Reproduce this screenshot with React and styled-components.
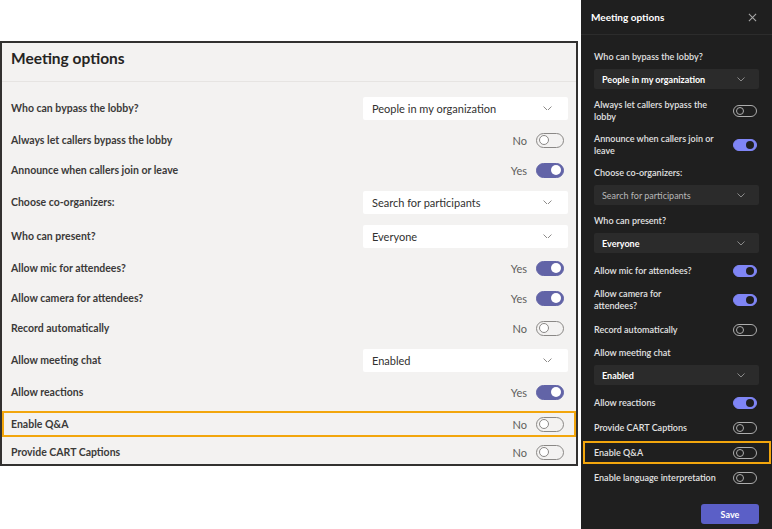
import styled, { createGlobalStyle } from 'styled-components'

const GlobalStyle = createGlobalStyle`
    body {
        margin: 0;
        background: #ffffff;
        font-family: Lato, "Liberation Sans", sans-serif;
    }
`

// data
const lightRows = [
    { label: 'Who can bypass the lobby?', value: 'People in my organization' },
    { label: 'Always let callers bypass the lobby', on: false },
    { label: 'Announce when callers join or leave', on: true },
    { label: 'Choose co-organizers:', value: 'Search for participants' },
    { label: 'Who can present?', value: 'Everyone' },
    { label: 'Allow mic for attendees?', on: true },
    { label: 'Allow camera for attendees?', on: true },
    { label: 'Record automatically', on: false },
    { label: 'Allow meeting chat', value: 'Enabled' },
    { label: 'Allow reactions', on: true },
    { label: 'Enable Q&A', on: false, highlight: true },
    { label: 'Provide CART Captions', on: false },
]

const darkRows = [
    { lines: ['Who can bypass the lobby?'], value: 'People in my organization', strong: true },
    { lines: ['Always let callers bypass the', 'lobby'], on: false },
    { lines: ['Announce when callers join or', 'leave'], on: true },
    { lines: ['Choose co-organizers:'], value: 'Search for participants' },
    { lines: ['Who can present?'], value: 'Everyone', strong: true },
    { lines: ['Allow mic for attendees?'], on: true },
    { lines: ['Allow camera for', 'attendees?'], on: true },
    { lines: ['Record automatically'], on: false },
    { lines: ['Allow meeting chat'], value: 'Enabled', strong: true },
    { lines: ['Allow reactions'], on: true },
    { lines: ['Provide CART Captions'], on: false },
    { lines: ['Enable Q&A'], on: false, highlight: true },
    { lines: ['Enable language interpretation'], on: false },
]

// subComponents
const Chevron = ({ color, size = 9 }) => (
    <svg width={size} height={size * 0.55} viewBox="0 0 10 5.5">
        <path d="M0.6 0.6 L5 5 L9.4 0.6" fill="none" stroke={color} strokeWidth="1.1" />
    </svg>
)

const CloseIcon = () => (
    <svg width="9" height="9" viewBox="0 0 10 10">
        <path d="M1 1 L9 9 M9 1 L1 9" stroke="#a8a8a8" strokeWidth="1.2" />
    </svg>
)

const LightItem = ({ row }) => {
    if (row.value) {
        return (
            <Row $tall>
                <Label>{row.label}</Label>
                <Select>
                    <span>{row.value}</span>
                    <Chevron color="#8a8886" />
                </Select>
            </Row>
        )
    }
    return (
        <Row $highlight={row.highlight}>
            <Label>{row.label}</Label>
            <SwitchWrap>
                <SwitchText>{row.on ? 'Yes' : 'No'}</SwitchText>
                <Switch $on={row.on}>
                    <Knob $on={row.on} />
                </Switch>
            </SwitchWrap>
        </Row>
    )
}

const DarkItem = ({ row }) => {
    const label = row.lines.map((line, i) => (
        <span key={i}>
            {line}
            {i < row.lines.length - 1 && <br />}
        </span>
    ))
    if (row.value) {
        return (
            <DarkGroup>
                <DarkLabel>{label}</DarkLabel>
                <DarkSelect $strong={row.strong}>
                    <span>{row.value}</span>
                    <Chevron color="#9a9a9a" size={8} />
                </DarkSelect>
            </DarkGroup>
        )
    }
    return (
        <DarkRow $highlight={row.highlight}>
            <DarkLabel>{label}</DarkLabel>
            <DarkSwitch $on={row.on}>
                <DarkKnob $on={row.on} />
            </DarkSwitch>
        </DarkRow>
    )
}

//mainComponent
const App = () => {
    return (
        <Page>
            <GlobalStyle />
            <LeftArea>
                <Card>
                    <CardTitle>Meeting options</CardTitle>
                    <List>
                        {lightRows.map((row, index) => (
                            <LightItem key={index} row={row} />
                        ))}
                    </List>
                </Card>
            </LeftArea>
            <Panel>
                <PanelHeader>
                    <PanelTitle>Meeting options</PanelTitle>
                    <CloseIcon />
                </PanelHeader>
                <PanelBody>
                    {darkRows.map((row, index) => (
                        <DarkItem key={index} row={row} />
                    ))}
                    <SaveButton>Save</SaveButton>
                </PanelBody>
            </Panel>
        </Page>
    )
}

export default App

//styles
const Page = styled.div`
    display: flex;
    width: 772px;
    height: 529px;
    overflow: hidden;
`
const LeftArea = styled.div`
    width: 578px;
    padding-top: 41px;
    margin-right: 3px;
`
const Card = styled.div`
    box-sizing: border-box;
    height: 425px;
    border: 2px solid #323130;
    background: #f3f2f1;
    overflow: hidden;
`
const CardTitle = styled.div`
    padding: 5px 9px 13px;
    font-size: 15.5px;
    line-height: 20px;
    font-weight: 700;
    color: #252423;
    border-bottom: 1px solid #e6e4e2;
`
const List = styled.div`
    padding-top: 9px;
`
const Row = styled.div`
    box-sizing: border-box;
    display: flex;
    align-items: center;
    justify-content: space-between;
    height: ${p => (p.$tall ? 34 : 30)}px;
    padding: 0 8px 0 9px;

    ${p => p.$highlight && `
        height: 26px;
        margin-top: 4px;
        border: 2px solid #f2a60d;
        padding: 0 6px 0 7px;
    `}
`
const Label = styled.span`
    font-size: 10.5px;
    font-weight: 700;
    color: #3b3a39;
`
const Select = styled.div`
    box-sizing: border-box;
    display: flex;
    align-items: center;
    justify-content: space-between;
    width: 205px;
    height: 23px;
    padding: 0 16px 0 9px;
    background: #ffffff;
    border-radius: 2px;
    font-size: 11px;
    color: #323130;
`
const SwitchWrap = styled.div`
    display: flex;
    align-items: center;
    gap: 9px;
    margin-right: 4px;
`
const SwitchText = styled.span`
    font-size: 11px;
    color: #605e5c;
`
const Switch = styled.div`
    box-sizing: border-box;
    display: flex;
    align-items: center;
    justify-content: ${p => (p.$on ? 'flex-end' : 'flex-start')};
    width: 28px;
    height: 15px;
    padding: 0 2px;
    border-radius: 8px;
    border: 1.5px solid ${p => (p.$on ? '#6264a7' : '#8a8886')};
    background: ${p => (p.$on ? '#6264a7' : 'transparent')};
`
const Knob = styled.span`
    box-sizing: border-box;
    width: 10px;
    height: 10px;
    border-radius: 50%;
    background: #ffffff;
    border: ${p => (p.$on ? 'none' : '1.5px solid #8a8886')};
`

const Panel = styled.div`
    display: flex;
    flex-direction: column;
    width: 191px;
    height: 529px;
    background: #1f1f1f;
    color: #ffffff;
`
const PanelHeader = styled.div`
    display: flex;
    align-items: center;
    justify-content: space-between;
    height: 34px;
    padding: 0 15px 0 10px;
    border-bottom: 1px solid #2c2c2c;
`
const PanelTitle = styled.span`
    font-size: 10px;
    font-weight: 700;
`
const PanelBody = styled.div`
    display: flex;
    flex-direction: column;
    padding-top: 11px;
`
const DarkGroup = styled.div`
    display: flex;
    flex-direction: column;
    gap: 6px;
    padding: 5px 13px;
`
const DarkLabel = styled.div`
    font-size: 9px;
    line-height: 12px;
    font-weight: 600;
    color: #e2e2e2;
    white-space: nowrap;
`
const DarkSelect = styled.div`
    box-sizing: border-box;
    display: flex;
    align-items: center;
    justify-content: space-between;
    height: 20px;
    padding: 0 14px 0 8px;
    background: #2b2b2b;
    border-radius: 2px;
    font-size: 9px;
    font-weight: ${p => (p.$strong ? 700 : 400)};
    color: ${p => (p.$strong ? '#ffffff' : '#b8b8b8')};
`
const DarkRow = styled.div`
    box-sizing: border-box;
    display: flex;
    align-items: center;
    justify-content: space-between;
    min-height: 25px;
    padding: 5px 15px 5px 13px;

    ${p => p.$highlight && `
        min-height: 23px;
        margin: 1px 1px 1px 2px;
        padding: 0 12px 0 9px;
        border: 2px solid #f2a60d;
    `}
`
const DarkSwitch = styled.div`
    box-sizing: border-box;
    display: flex;
    align-items: center;
    justify-content: ${p => (p.$on ? 'flex-end' : 'flex-start')};
    width: 24px;
    height: 12px;
    padding: 0 2px;
    border-radius: 6px;
    border: 1px solid ${p => (p.$on ? '#7f85f5' : '#adadad')};
    background: ${p => (p.$on ? '#7f85f5' : 'transparent')};
`
const DarkKnob = styled.span`
    box-sizing: border-box;
    width: 8px;
    height: 8px;
    border-radius: 50%;
    background: ${p => (p.$on ? '#1f1f1f' : 'transparent')};
    border: ${p => (p.$on ? 'none' : '1px solid #adadad')};
`
const SaveButton = styled.button`
    align-self: flex-end;
    width: 58px;
    height: 20px;
    margin: 14px 13px 0 0;
    border: none;
    border-radius: 3px;
    background: #5b5fc7;
    color: #ffffff;
    font-family: inherit;
    font-size: 9px;
    font-weight: 700;
`
